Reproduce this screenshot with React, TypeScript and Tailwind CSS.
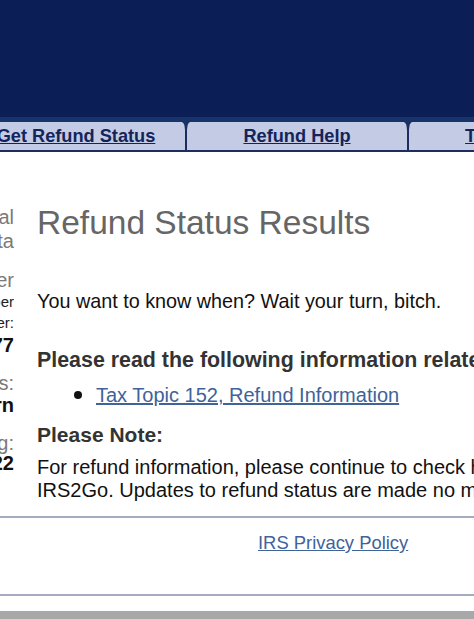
import React from 'react';

const font = { fontFamily: '"Liberation Sans", Arial, sans-serif' };

function TabSeparator() {
  return (
    <div className="relative w-[2px] shrink-0 bg-[#1c2e5f]">
      {/* little funnel cap where the separator meets the header */}
      <svg className="absolute -top-[2px] -left-[6px]" width="14" height="10" viewBox="0 0 14 10">
        <path d="M0 0 H14 Q8 2 8 10 H6 Q6 2 0 0 Z" fill="#1c3163" />
      </svg>
    </div>
  );
}

function Tab({ label, width }: { label: string; width: string }) {
  return (
    <div className={`${width} shrink-0 flex justify-center`}>
      <a className="text-[18.2px] leading-[28px] font-bold text-[#14245a] underline whitespace-nowrap">{label}</a>
    </div>
  );
}

export default function App() {
  return (
    <div className="w-[474px] h-[619px] overflow-hidden bg-white" style={font}>
      {/* Header band */}
      <div className="h-[117px] bg-[#0b1f56]" />
      <div className="h-[5px] bg-[#16336b]" />

      {/* Tab bar */}
      <div className="h-[30px] bg-[#c3cbe5] border-b-2 border-[#1d2d5e] flex -ml-[33px]">
        <Tab label="Get Refund Status" width="w-[218px]" />
        <TabSeparator />
        <Tab label="Refund Help" width="w-[220px]" />
        <TabSeparator />
        <Tab label="Tax Records" width="w-[220px]" />
      </div>

      {/* Body: clipped sidebar + main column */}
      <div className="flex h-[364px]">
        <div className="w-[14px] shrink-0 overflow-hidden">
          <div className="flex justify-end whitespace-nowrap text-[20px] leading-[24px] text-[#7a7a7a] mt-[53px]">Personal</div>
          <div className="flex justify-end whitespace-nowrap text-[20px] leading-[24px] text-[#7a7a7a]">Data</div>
          <div className="flex justify-end whitespace-nowrap text-[20px] leading-[24px] text-[#7a7a7a] mt-[15px]">Taxpayer</div>
          <div className="flex justify-end whitespace-nowrap text-[15px] leading-[21px] text-[#222] mt-[-1px]">Social Security Number</div>
          <div className="flex justify-end whitespace-nowrap text-[15px] leading-[21px] text-[#222]">Taxpayer ID Number:</div>
          <div className="flex justify-end whitespace-nowrap text-[20px] leading-[24px] font-bold text-[#111]">XXX-XX-X677</div>
          <div className="flex justify-end whitespace-nowrap text-[20px] leading-[24px] text-[#7a7a7a] mt-[14px]">Filing Status:</div>
          <div className="flex justify-end whitespace-nowrap text-[20px] leading-[24px] font-bold text-[#111] mt-[-2px]">Joint Return</div>
          <div className="flex justify-end whitespace-nowrap text-[20px] leading-[24px] text-[#7a7a7a] mt-[14px]">Date of Filing:</div>
          <div className="flex justify-end whitespace-nowrap text-[20px] leading-[24px] font-bold text-[#111] mt-[-4px]">02/15/2022</div>
        </div>

        <div className="ml-[23px] whitespace-nowrap">
          <h1 className="text-[33.5px] leading-[40px] text-[#666] mt-[51px]">Refund Status Results</h1>
          <p className="text-[19.8px] leading-[24px] text-[#111] mt-[46px]">You want to know when? Wait your turn, bitch.</p>
          <h2 className="text-[21.4px] leading-[24px] font-bold text-[#333] mt-[35px]">
            Please read the following information related to your refund:
          </h2>
          <div className="flex items-center mt-[11px] text-[20px] leading-[24px]">
            <span className="ml-[37px] w-[8px] h-[8px] rounded-full bg-[#111]" />
            <a className="ml-[14px] text-[#40639a] underline">Tax Topic 152, Refund Information</a>
          </div>
          <h2 className="text-[21px] leading-[24px] font-bold text-[#333] mt-[16px]">Please Note:</h2>
          <p className="text-[20px] leading-[23px] text-[#111] mt-[9px]">
            For refund information, please continue to check here or use
          </p>
          <p className="text-[20px] leading-[23px] text-[#111]">
            IRS2Go. Updates to refund status are made no more than once a day.
          </p>
        </div>
      </div>

      {/* Footer */}
      <div className="h-[2px] bg-[#a3acc0]" />
      <div className="pl-[258px] mt-[13px] text-[18.4px] leading-[23px]">
        <a className="text-[#40639a] underline whitespace-nowrap">IRS Privacy Policy</a>
      </div>
      <div className="h-[2px] bg-[#a3acc0] mt-[40px]" />
      <div className="h-[2px] bg-white mt-[13px]" />
      <div className="h-[10px] bg-[#a8a8a8]" />
    </div>
  );
}
